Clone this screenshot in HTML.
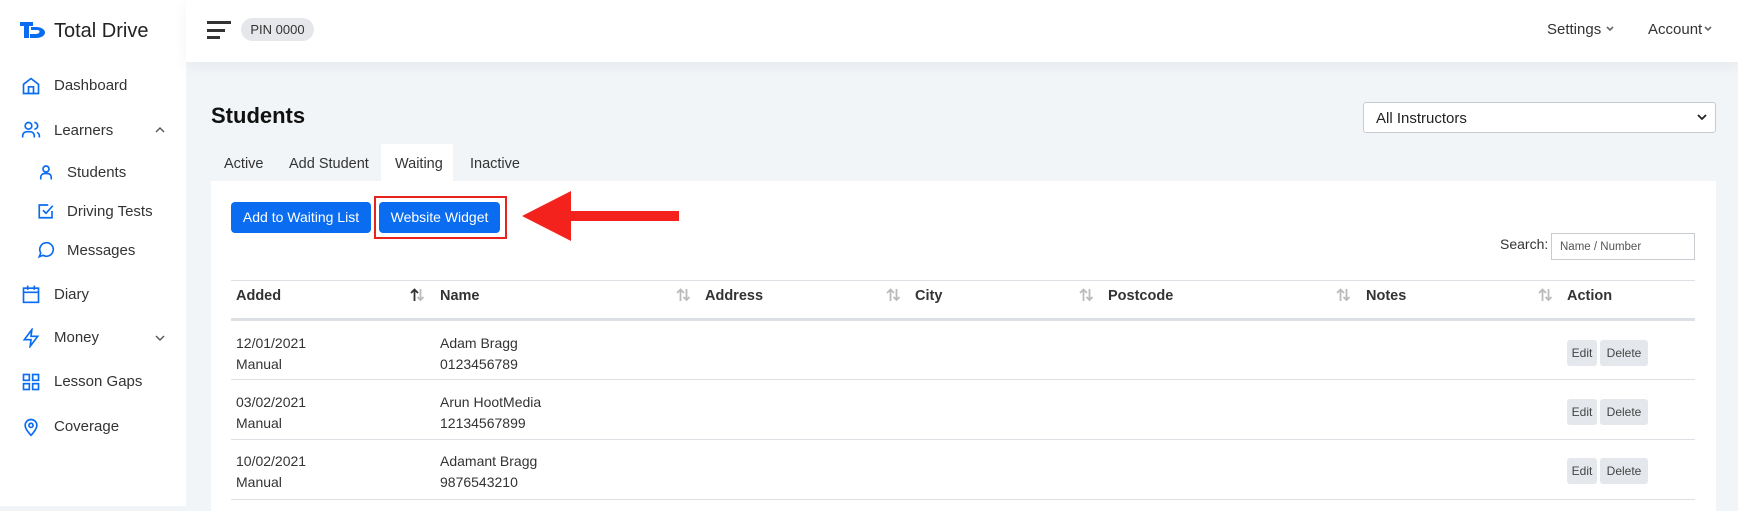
<!DOCTYPE html>
<html><head><meta charset="utf-8"><style>
*{box-sizing:border-box;margin:0;padding:0}
body{width:1738px;height:506px;overflow:hidden;font-family:"Liberation Sans",sans-serif;color:#333;background:#f1f5f8;position:relative}
.a{position:absolute;white-space:nowrap}
.side{position:absolute;left:0;top:0;width:186px;height:506px;background:#fff}
.hdr{position:absolute;left:186px;top:0;right:0;height:62px;background:#fff;box-shadow:0 4px 14px rgba(0,0,0,.05)}
.nav{font-size:15px;color:#333}
.ic{position:absolute}
svg{display:block}
.btn{position:absolute;background:#0a6cf0;color:#fff;font-size:14px;border-radius:4px;text-align:center;line-height:31px}
.th{font-size:14.5px;font-weight:bold;color:#333;top:288px}
.td{font-size:14px;color:#333}
.gb{position:absolute;background:#e4e7eb;border-radius:3px;font-size:12px;color:#444;line-height:26px;text-align:center;height:26px}
.line{position:absolute;left:231px;width:1464px;height:1px;background:#dde1e5}
.so{position:absolute;top:288px}
</style></head><body>
<div class="side"></div>
<div class="hdr"></div>
<!-- logo -->
<svg class="a" style="left:19px;top:21px" width="27" height="18" viewBox="0 0 27 18"><path d="M1 1h13v4H10v12H5V5H1z" fill="#0a6cf0"/><path d="M12 6h5c6 0 9 3 9 5.5S23 17 17 17h-6V13h5c3 0 4.5-1 4.5-2.5S19 9 16 9h-4z" fill="#0a6cf0"/></svg>
<div class="a" style="left:54px;top:20px;font-size:20px;color:#222">Total Drive</div>
<!-- nav -->
<svg class="ic" style="left:21px;top:76px" width="20" height="20" viewBox="0 0 24 24" fill="none" stroke="#0a6cf0" stroke-width="2"><path d="M3 10l9-7 9 7v11H3z"/><path d="M9 21v-8h6v8"/></svg>
<div class="a nav" style="left:54px;top:77px">Dashboard</div>
<svg class="ic" style="left:21px;top:120px" width="20" height="20" viewBox="0 0 24 24" fill="none" stroke="#0a6cf0" stroke-width="2"><circle cx="9" cy="7" r="4"/><path d="M2 21v-2a5 5 0 015-5h4a5 5 0 015 5v2M16 3a4 4 0 010 8M22 21v-2a4 4 0 00-3-4"/></svg>
<div class="a nav" style="left:54px;top:122px">Learners</div>
<svg class="a" style="left:155px;top:127px" width="10" height="6" viewBox="0 0 10 6" fill="none" stroke="#555" stroke-width="1.4"><path d="M1 5l4-4 4 4"/></svg>
<svg class="ic" style="left:37px;top:163px" width="18" height="18" viewBox="0 0 24 24" fill="none" stroke="#0a6cf0" stroke-width="2.2"><circle cx="12" cy="8" r="4"/><path d="M5 22v-3a5 5 0 015-5h4a5 5 0 015 5v3"/></svg>
<div class="a nav" style="left:67px;top:164px">Students</div>
<svg class="ic" style="left:37px;top:202px" width="18" height="18" viewBox="0 0 24 24" fill="none" stroke="#0a6cf0" stroke-width="2.2"><path d="M20 12v9H3V4h12"/><path d="M8 11l4 4 9-10"/></svg>
<div class="a nav" style="left:67px;top:203px">Driving Tests</div>
<svg class="ic" style="left:37px;top:241px" width="18" height="18" viewBox="0 0 24 24" fill="none" stroke="#0a6cf0" stroke-width="2.2"><path d="M3 21l2-5a9 9 0 113 3z"/></svg>
<div class="a nav" style="left:67px;top:242px">Messages</div>
<svg class="ic" style="left:21px;top:284px" width="20" height="20" viewBox="0 0 24 24" fill="none" stroke="#0a6cf0" stroke-width="2"><rect x="3" y="5" width="18" height="17"/><path d="M3 10h18M8 2v5M16 2v5"/></svg>
<div class="a nav" style="left:54px;top:286px">Diary</div>
<svg class="ic" style="left:21px;top:328px" width="20" height="20" viewBox="0 0 24 24" fill="none" stroke="#0a6cf0" stroke-width="2"><path d="M13 2L4 14h8l-1 8 9-12h-8z"/></svg>
<div class="a nav" style="left:54px;top:329px">Money</div>
<svg class="a" style="left:155px;top:335px" width="10" height="6" viewBox="0 0 10 6" fill="none" stroke="#555" stroke-width="1.4"><path d="M1 1l4 4 4-4"/></svg>
<svg class="ic" style="left:21px;top:372px" width="20" height="20" viewBox="0 0 24 24" fill="none" stroke="#0a6cf0" stroke-width="2"><rect x="3" y="3" width="7" height="7"/><rect x="14" y="3" width="7" height="7"/><rect x="3" y="14" width="7" height="7"/><rect x="14" y="14" width="7" height="7"/></svg>
<div class="a nav" style="left:54px;top:373px">Lesson Gaps</div>
<svg class="ic" style="left:21px;top:416px" width="20" height="22" viewBox="0 0 24 24" fill="none" stroke="#0a6cf0" stroke-width="2"><path d="M12 22s-7-7-7-12a7 7 0 0114 0c0 5-7 12-7 12z"/><circle cx="12" cy="10" r="2.5"/></svg>
<div class="a nav" style="left:54px;top:418px">Coverage</div>
<!-- header -->
<div class="a" style="left:207px;top:21px;width:24px;height:3px;background:#333"></div>
<div class="a" style="left:207px;top:29px;width:18px;height:3px;background:#333"></div>
<div class="a" style="left:207px;top:36px;width:13px;height:3px;background:#333"></div>
<div class="a" style="left:241px;top:18px;width:73px;height:23px;border-radius:12px;background:#e5e7ea;font-size:13px;color:#333;text-align:center;line-height:23px">PIN 0000</div>
<div class="a" style="left:1547px;top:21px;font-size:15px;color:#333">Settings</div>
<svg class="a" style="left:1606px;top:26px" width="8" height="6" viewBox="0 0 8 6" fill="none" stroke="#666" stroke-width="1.6"><path d="M1 1l3 3 3-3"/></svg>
<div class="a" style="left:1648px;top:21px;font-size:15px;color:#333">Account</div>
<svg class="a" style="left:1704px;top:26px" width="8" height="6" viewBox="0 0 8 6" fill="none" stroke="#666" stroke-width="1.6"><path d="M1 1l3 3 3-3"/></svg>
<!-- title -->
<div class="a" style="left:211px;top:103px;font-size:22px;font-weight:bold;color:#111">Students</div>
<div class="a" style="left:1363px;top:102px;width:353px;height:31px;background:#fff;border:1px solid #c8ccd0;border-radius:3px;font-size:15px;color:#222;padding:7px 12px">All Instructors</div>
<svg class="a" style="left:1697px;top:114px" width="10" height="7" viewBox="0 0 10 7" fill="none" stroke="#222" stroke-width="1.8"><path d="M1 1l4 4 4-4"/></svg>
<!-- tabs -->
<div class="a" style="left:381px;top:144px;width:72px;height:38px;background:#fff"></div>
<div class="a" style="left:224px;top:156px;font-size:14.5px">Active</div>
<div class="a" style="left:289px;top:156px;font-size:14.5px">Add Student</div>
<div class="a" style="left:395px;top:156px;font-size:14.5px">Waiting</div>
<div class="a" style="left:470px;top:156px;font-size:14.5px">Inactive</div>
<!-- card -->
<div class="a" style="left:211px;top:181px;width:1505px;height:330px;background:#fff"></div>
<div class="btn" style="left:231px;top:202px;width:140px;height:31px">Add to Waiting List</div>
<div class="a" style="left:374px;top:196px;width:133px;height:43px;border:2px solid #e8231d"></div>
<div class="btn" style="left:379px;top:202px;width:121px;height:31px">Website Widget</div>
<svg class="a" style="left:520px;top:188px" width="160" height="56"><polygon points="2,28 51,3 51,23 159,23 159,33 51,33 51,53" fill="#f3221c"/></svg>
<div class="a" style="left:1500px;top:236px;font-size:14px">Search:</div>
<div class="a" style="left:1551px;top:233px;width:144px;height:27px;border:1px solid #c8ccd0;font-size:11.5px;color:#555;padding:7px 8px">Name / Number</div>
<!-- table -->
<div class="line" style="top:280px"></div>
<div class="a th" style="left:236px">Added</div>
<div class="a th" style="left:440px">Name</div>
<div class="a th" style="left:705px">Address</div>
<div class="a th" style="left:915px">City</div>
<div class="a th" style="left:1108px">Postcode</div>
<div class="a th" style="left:1366px">Notes</div>
<div class="a th" style="left:1567px">Action</div>
<svg class="so" style="left:410px" width="15" height="14" viewBox="0 0 15 14" fill="none" stroke-width="1.8"><path d="M4.5 13V2M1 5l3.5-3.5L8 5" stroke="#333"/><path d="M10.5 1v11M7.5 9l3 3 3-3" stroke="#bbb"/></svg>
<svg class="so" style="left:676px" width="15" height="14" viewBox="0 0 15 14" fill="none" stroke="#bbb" stroke-width="1.8"><path d="M4.5 13V2M1 5l3.5-3.5L8 5M10.5 1v11M7.5 9l3 3 3-3"/></svg>
<svg class="so" style="left:886px" width="15" height="14" viewBox="0 0 15 14" fill="none" stroke="#bbb" stroke-width="1.8"><path d="M4.5 13V2M1 5l3.5-3.5L8 5M10.5 1v11M7.5 9l3 3 3-3"/></svg>
<svg class="so" style="left:1079px" width="15" height="14" viewBox="0 0 15 14" fill="none" stroke="#bbb" stroke-width="1.8"><path d="M4.5 13V2M1 5l3.5-3.5L8 5M10.5 1v11M7.5 9l3 3 3-3"/></svg>
<svg class="so" style="left:1336px" width="15" height="14" viewBox="0 0 15 14" fill="none" stroke="#bbb" stroke-width="1.8"><path d="M4.5 13V2M1 5l3.5-3.5L8 5M10.5 1v11M7.5 9l3 3 3-3"/></svg>
<svg class="so" style="left:1538px" width="15" height="14" viewBox="0 0 15 14" fill="none" stroke="#bbb" stroke-width="1.8"><path d="M4.5 13V2M1 5l3.5-3.5L8 5M10.5 1v11M7.5 9l3 3 3-3"/></svg>
<div class="a" style="left:231px;top:318px;width:1464px;height:3px;background:#dde1e5"></div>

<div class="a td" style="left:236px;top:333px;line-height:21px">12/01/2021<br>Manual</div>
<div class="a td" style="left:440px;top:333px;line-height:21px">Adam Bragg<br>0123456789</div>
<div class="gb" style="left:1567px;top:340px;width:30px">Edit</div>
<div class="gb" style="left:1600px;top:340px;width:48px">Delete</div>
<div class="line" style="top:379px"></div>

<div class="a td" style="left:236px;top:392px;line-height:21px">03/02/2021<br>Manual</div>
<div class="a td" style="left:440px;top:392px;line-height:21px">Arun HootMedia<br>12134567899</div>
<div class="gb" style="left:1567px;top:399px;width:30px">Edit</div>
<div class="gb" style="left:1600px;top:399px;width:48px">Delete</div>
<div class="line" style="top:439px"></div>

<div class="a td" style="left:236px;top:451px;line-height:21px">10/02/2021<br>Manual</div>
<div class="a td" style="left:440px;top:451px;line-height:21px">Adamant Bragg<br>9876543210</div>
<div class="gb" style="left:1567px;top:458px;width:30px">Edit</div>
<div class="gb" style="left:1600px;top:458px;width:48px">Delete</div>
<div class="line" style="top:499px"></div>
</body></html>
